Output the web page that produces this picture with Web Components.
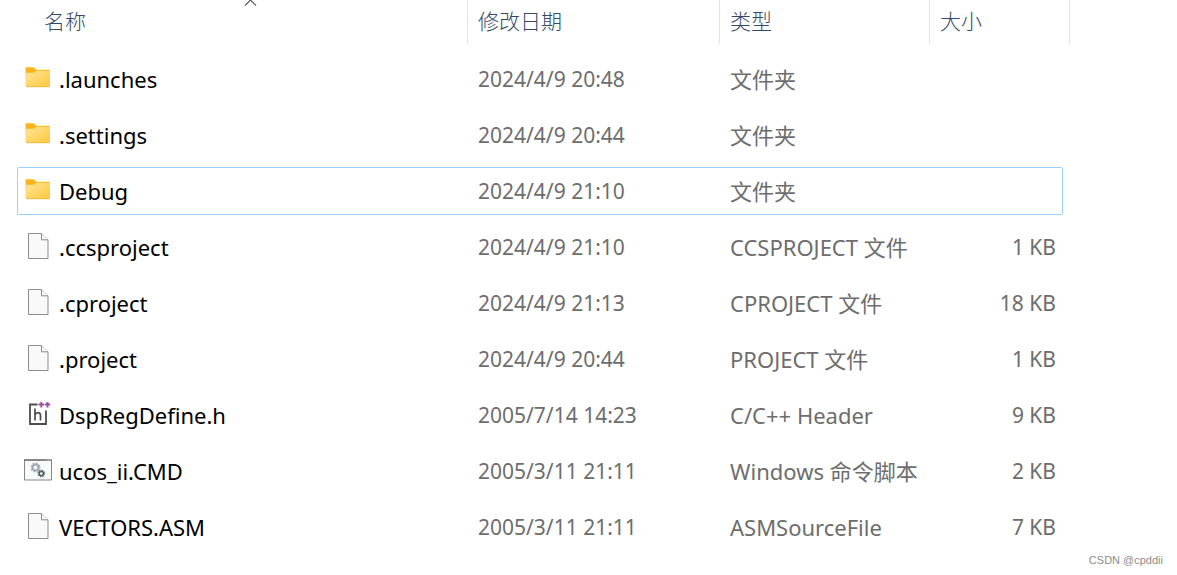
<!DOCTYPE html>
<html lang="zh-CN">
<head>
<meta charset="utf-8">
<title>文件列表</title>
<style>
  body { margin: 0; background: #fff; font-family: "Noto Sans", "Noto Sans CJK SC", sans-serif; }
</style>
</head>
<body>
<file-list></file-list>
<page-credit>CSDN @cpddii</page-credit>

<script>
const ICONS = {
  folder: `
    <defs><linearGradient id="g" x1="0" y1="0" x2="1" y2="1"><stop offset="0" stop-color="#ffe59a"/><stop offset="1" stop-color="#ffc83a"/></linearGradient></defs>
    <path d="M1.5 3.5q0-1.3 1.3-1.3h6.4q.8 0 1.3.6l1.6 1.9h12.6q1.3 0 1.3 1.3v6H1.5z" fill="#f9b51c"/>
    <path d="M1.5 7.7h8q.8 0 1.3-.5l1-.9q.5-.5 1.2-.5h11.7q1.3 0 1.3 1.3v13.6q0 1.3-1.3 1.3H2.8q-1.3 0-1.3-1.3z" fill="url(#g)"/>
    <path d="M2.3 21.7h23" stroke="#efb036" stroke-width=".7"/>`,
  file: `
    <path d="M4.5.5h13l6.5 6.3V25.5H4.5z" fill="#f9f9f9" stroke="#8c8c8c"/>
    <path d="M17.5.5v6.3H24" fill="#fff" stroke="#8c8c8c"/>`,
  header: `
    <path d="M13.500 3.500H6v19.500h16V9.500" fill="none" stroke="#4d4d4d" stroke-width="1.800"/>
    <path d="M11 7.500V19.500M11 14q1-2.300 3-2.300 2.500 0 2.500 2.800v5" fill="none" stroke="#4d4d4d" stroke-width="1.700"/>
    <path d="M14.500 3.500h5.500M17.300 1v5.500M20.700 3.500h5.500M23.500 1v5.500" stroke="#9b4f9f" stroke-width="1.900"/>`,
  script: `
    <path d="M.5 3h27v20H.5z" fill="#f8f9fa" stroke="#858585"/>
    <path d="M0 3h28" stroke="#737373" stroke-width="1.5"/>
    <path d="M22 3h1M24 3h1M26 3h1" stroke="#ddd"/>
    <circle cx="11.5" cy="10.5" r="3" fill="none" stroke="#a0abb5" stroke-width="2"/>
    <circle cx="11.5" cy="10.5" r="4.3" fill="none" stroke="#a0abb5" stroke-width="1.4" stroke-dasharray="1.7 1.68"/>
    <circle cx="17.3" cy="16.5" r="2.2" fill="none" stroke="#59636c" stroke-width="1.7"/>
    <circle cx="17.3" cy="16.5" r="3.3" fill="none" stroke="#59636c" stroke-width="1.2" stroke-dasharray="1.3 1.29"/>`
};

customElements.define("file-icon", class extends HTMLElement {
  connectedCallback() {
    if (this.shadowRoot) return;
    this.attachShadow({ mode: "open" }).innerHTML = `
      <style>:host { display: block; flex: none; width: 28px; height: 28px } svg { display: block }</style>
      <svg width="28" height="28" viewBox="0 0 28 28" aria-hidden="true">${ICONS[this.getAttribute("kind")]}</svg>`;
  }
});

const FILES = [
  ["folder", ".launches", "2024/4/9 20:48", "文件夹", ""],
  ["folder", ".settings", "2024/4/9 20:44", "文件夹", ""],
  ["folder", "Debug", "2024/4/9 21:10", "文件夹", "", true],
  ["file", ".ccsproject", "2024/4/9 21:10", "CCSPROJECT 文件", "1 KB"],
  ["file", ".cproject", "2024/4/9 21:13", "CPROJECT 文件", "18 KB"],
  ["file", ".project", "2024/4/9 20:44", "PROJECT 文件", "1 KB"],
  ["header", "DspRegDefine.h", "2005/7/14 14:23", "C/C++ Header", "9 KB"],
  ["script", "ucos_ii.CMD", "2005/3/11 21:11", "Windows 命令脚本", "2 KB"],
  ["file", "VECTORS.ASM", "2005/3/11 21:11", "ASMSourceFile", "7 KB"]
];

customElements.define("file-list", class extends HTMLElement {
  connectedCallback() {
    if (this.shadowRoot) return;
    const rows = FILES.map(([kind, name, date, type, size, focused]) => `
      <tr${focused ? ' class="focused"' : ""}>
        <td><div class="name"><file-icon kind="${kind}"></file-icon><span>${name}</span></div></td>
        <td>${date}</td><td class="kind">${type}</td><td class="size">${size}</td>
      </tr>`).join("");
    this.attachShadow({ mode: "open" }).innerHTML = `
      <style>
        :host { display: block; padding: 0 107px 0 17px; font-size: 21px; line-height: 28px; color: #6d6d6d }
        table { width: 100%; table-layout: fixed; border-collapse: separate; border-spacing: 0; white-space: nowrap }
        .date { width: 252px } .type { width: 210px } .bytes { width: 140px }
        th { position: relative; box-sizing: border-box; height: 44px; padding: 0; border-right: 1px solid #e5e5e5; text-align: left; vertical-align: top; font-weight: 300 }
        button { display: block; width: 100%; height: 42px; padding: 0 10px; border: 0; background: none; color: #34496a; font: inherit; text-align: left }
        th:first-child button { padding-left: 27px }
        .sort { position: absolute; top: 0; left: 50%; display: block }
        tbody::before { content: ""; display: table-row; height: 7px }
        tbody tr { position: relative }
        td { box-sizing: border-box; height: 56px; padding: 0 10px }
        td:first-child { padding: 0 7px }
        .name { display: flex; align-items: center; gap: 7px; color: #000 }
        .name, .kind { font-size: 22px }
        td.size { padding-right: 14px; text-align: right }
        .focused td:last-child::after { content: ""; position: absolute; inset: 4px 7px 4px 0; border: 1px solid #99d1ff; border-radius: 2px; pointer-events: none }
      </style>
      <table>
        <colgroup><col><col class="date"><col class="type"><col class="bytes"></colgroup>
        <thead><tr>
          <th scope="col" aria-sort="ascending"><button type="button">名称</button>
            <svg class="sort" width="16" height="6" viewBox="0 0 16 6" aria-hidden="true"><path d="M3 5.500 8.500 0 14 5.500" fill="none" stroke="#5c5c5c" stroke-width="1.200"/></svg></th>
          <th scope="col"><button type="button">修改日期</button></th>
          <th scope="col"><button type="button">类型</button></th>
          <th scope="col"><button type="button">大小</button></th>
        </tr></thead>
        <tbody>${rows}</tbody>
      </table>`;
  }
});

customElements.define("page-credit", class extends HTMLElement {
  constructor() {
    super();
    this.attachShadow({ mode: "open" }).innerHTML = `
      <style>:host { display: block; padding-right: 14px; text-align: right; font: 11px/11px "Liberation Sans", Arial, sans-serif; color: #8c8c8c }</style>
      <slot></slot>`;
  }
});
</script>
</body>
</html>
